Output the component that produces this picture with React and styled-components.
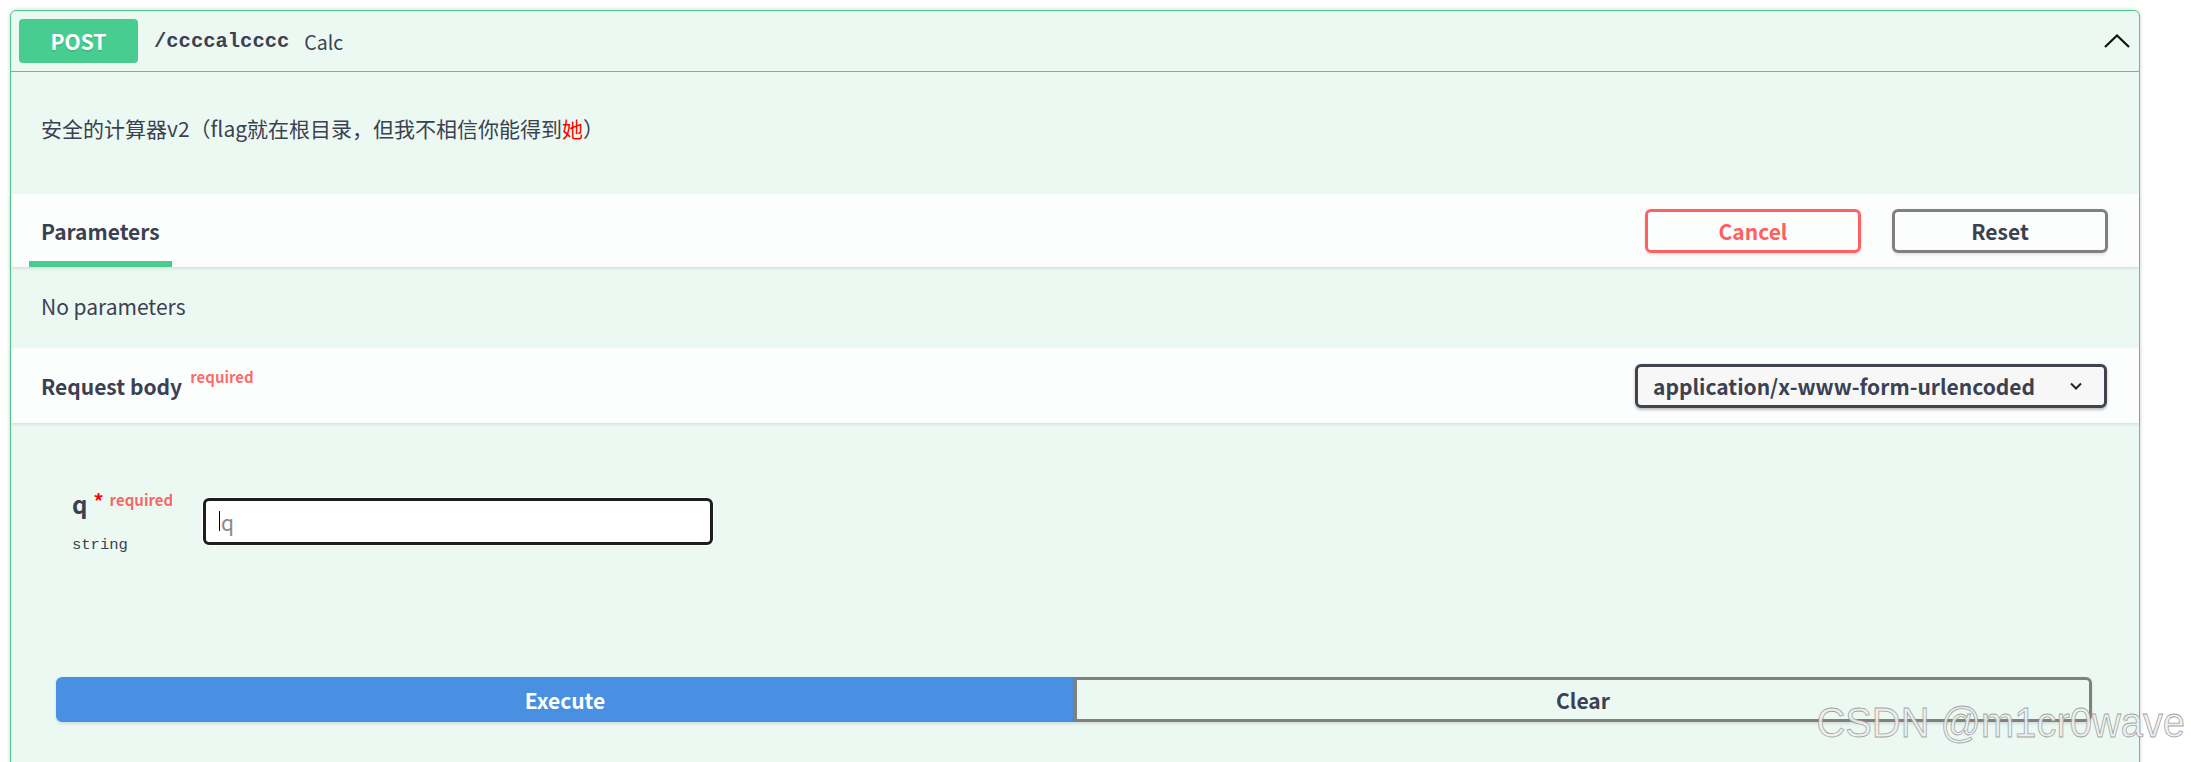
import React from 'react';
import styled, { createGlobalStyle } from 'styled-components';

const GlobalStyle = createGlobalStyle`
  html, body { margin: 0; padding: 0; background: #fff; overflow: hidden; }
  body { font-family: "Noto Sans CJK SC", "Noto Sans", sans-serif; color: #3b4151; }
  * { box-sizing: border-box; }
`;

const SANS = `"Noto Sans CJK SC", "Noto Sans", sans-serif`;
const MONO = `"Liberation Mono", "DejaVu Sans Mono", monospace`;

const Page = styled.div`
  position: relative;
  height: 762px;
  overflow: hidden;
  padding: 10px 51px 0 10px;
`;

const OpBlock = styled.section`
  border: 1px solid #49cc90;
  border-radius: 6px 6px 0 0;
  background: #ebf9f2;
  box-shadow: 0 0 4px rgba(0, 0, 0, 0.19);
`;

const Summary = styled.div`
  display: flex;
  align-items: center;
  padding: 8px 9px 8px 8px;
  border-bottom: 1px solid #49cc90;
`;

const Method = styled.span`
  display: flex;
  align-items: center;
  justify-content: center;
  width: 119px;
  height: 44px;
  border-radius: 4px;
  background: #49cc90;
  color: #fff;
  font-family: ${SANS};
  font-size: 21px;
  font-weight: 700;
  text-shadow: 0 1.5px 0 rgba(0, 0, 0, 0.1);
`;

const Path = styled.span`
  margin-left: 16px;
  padding-right: 15px;
  font-family: ${MONO};
  font-size: 20.5px;
  font-weight: 700;
  color: #3b4151;
`;

const SummaryDesc = styled.span`
  font-family: ${SANS};
  font-size: 19.5px;
  color: #3b4151;
`;

const Arrow = styled.svg`
  margin-left: auto;
  display: block;
`;

const Description = styled.div`
  padding: 41px 30px 51px;
  font-size: 21px;
  line-height: 30px;
  color: #3b4151;
`;

const Red = styled.span`
  color: #ff0000;
`;

const SectionHeader = styled.div`
  position: relative;
  z-index: 1;
  display: flex;
  align-items: center;
  height: ${(p) => p.$h}px;
  padding: ${(p) => p.$pad};
  background: rgba(255, 255, 255, 0.85);
  box-shadow: 0 1.5px 3px rgba(0, 0, 0, 0.1);
`;

const Tab = styled.h4`
  position: relative;
  display: flex;
  align-items: center;
  height: 100%;
  margin: 0;
  padding: 0 12px;
  font-size: 21px;
  font-weight: 700;
  color: #3b4151;
  &::after {
    content: "";
    position: absolute;
    left: 0;
    right: 0;
    bottom: 0;
    height: 6px;
    background: #49cc90;
  }
`;

const Title = styled.h4`
  margin: 0;
  font-size: 21px;
  font-weight: 700;
  color: #3b4151;
`;

const Sup = styled.sup`
  position: relative;
  top: -4px;
  margin-left: 8px;
  font-size: 15px;
  font-weight: 600;
  color: rgba(255, 0, 0, 0.6);
`;

const Actions = styled.div`
  display: flex;
  gap: 31px;
  margin-left: auto;
`;

const Button = styled.button`
  width: 216px;
  height: 44px;
  border: 3px solid ${(p) => (p.$danger ? '#ff6060' : '#808080')};
  border-radius: 6px;
  background: transparent;
  color: ${(p) => (p.$danger ? '#ff6060' : '#3b4151')};
  font-family: ${SANS};
  font-size: 21px;
  font-weight: 700;
  box-shadow: 0 1.5px 3px rgba(0, 0, 0, 0.1);
`;

const NoParams = styled.div`
  padding: 24px 30px 27px;
  font-size: 21px;
  line-height: 30px;
  color: #3b4151;
`;

const SelectBox = styled.div`
  display: flex;
  align-items: center;
  margin-left: auto;
  width: 472px;
  height: 44px;
  padding: 0 22px 0 15px;
  border: 3px solid #41444e;
  border-radius: 6px;
  background: #f7f7f7;
  box-shadow: 0 1.5px 3px rgba(0, 0, 0, 0.25);
  font-size: 21px;
  font-weight: 700;
  color: #3b4151;
  & svg { margin-left: auto; }
`;

const BodyContent = styled.div`
  padding: 67px 30px 0;
`;

const ParamRow = styled.div`
  display: flex;
  align-items: flex-start;
  padding-left: 31px;
`;

const NameCol = styled.div`
  width: 131px;
  flex: none;
`;

const ParamName = styled.div`
  font-size: 24px;
  line-height: 28px;
  font-weight: 700;
  color: #3b4151;
  white-space: nowrap;
`;

const Star = styled.span`
  margin-left: 6px;
  position: relative;
  top: -5px;
  font-size: 20px;
  color: red;
`;

const ReqTag = styled.span`
  position: relative;
  top: -8px;
  margin-left: 6px;
  font-size: 15px;
  font-weight: 600;
  color: rgba(255, 0, 0, 0.6);
`;

const ParamType = styled.div`
  margin-top: 13px;
  font-family: ${MONO};
  font-size: 15.5px;
  line-height: 20px;
  font-weight: 400;
  color: #3b4151;
`;

const InputCol = styled.div`
  position: relative;
  padding-top: 8px;
`;

const TextInput = styled.input`
  display: block;
  width: 510px;
  height: 47px;
  padding: 0 15px;
  border: 3px solid #1e1e1e;
  border-radius: 6px;
  background: #fff;
  box-shadow: 0 0 0 1px #fff;
  outline: none;
  font-family: ${SANS};
  font-size: 21px;
  color: #3b4151;
  &::placeholder { color: #8a8a8a; }
`;

const Caret = styled.span`
  position: absolute;
  left: 16px;
  top: 21px;
  width: 1px;
  height: 20px;
  background: #000;
`;

const BtnGroup = styled.div`
  display: flex;
  padding: 122px 47px 45px 45px;
`;

const WideButton = styled.button`
  flex: 1;
  height: 45px;
  border: 3px solid ${(p) => (p.$primary ? '#4990e2' : '#808080')};
  border-radius: ${(p) => (p.$primary ? '6px 0 0 6px' : '0 6px 6px 0')};
  background: ${(p) => (p.$primary ? '#4990e2' : 'transparent')};
  color: ${(p) => (p.$primary ? '#fff' : '#3b4151')};
  font-family: ${SANS};
  font-size: 21px;
  font-weight: 700;
  box-shadow: 0 1.5px 3px rgba(0, 0, 0, 0.1);
`;

const Watermark = styled.div`
  position: absolute;
  right: 6px;
  top: 702px;
  font-family: "Liberation Sans", Arial, sans-serif;
  font-size: 42px;
  line-height: 42px;
  color: rgba(238, 238, 238, 0.9);
  -webkit-text-stroke: 0.8px rgba(140, 140, 140, 0.8);
  transform: scaleX(0.95);
  transform-origin: right center;
  white-space: nowrap;
  pointer-events: none;
`;

export default function App() {
  return (
    <>
      <GlobalStyle />
      <Page>
        <OpBlock>
          <Summary>
            <Method>POST</Method>
            <Path>/ccccalcccc</Path>
            <SummaryDesc>Calc</SummaryDesc>
            <Arrow width="26" height="14" viewBox="0 0 26 14">
              <polyline points="1,13 13,1.5 25,13" fill="none" stroke="#111" strokeWidth="2.2" />
            </Arrow>
          </Summary>
          <Description>
            安全的计算器v2（flag就在根目录，但我不相信你能得到<Red>她</Red>）
          </Description>
          <SectionHeader $h={73} $pad="0 31px 0 18px">
            <Tab>Parameters</Tab>
            <Actions>
              <Button $danger>Cancel</Button>
              <Button>Reset</Button>
            </Actions>
          </SectionHeader>
          <NoParams>No parameters</NoParams>
          <SectionHeader $h={75} $pad="0 32px 0 30px">
            <Title>
              Request body<Sup>required</Sup>
            </Title>
            <SelectBox>
              <span>application/x-www-form-urlencoded</span>
              <svg width="12" height="8" viewBox="0 0 12 8">
                <polyline points="1,1.5 6,6.5 11,1.5" fill="none" stroke="#222" strokeWidth="2" />
              </svg>
            </SelectBox>
          </SectionHeader>
          <BodyContent>
            <ParamRow>
              <NameCol>
                <ParamName>
                  q<Star>*</Star>
                  <ReqTag>required</ReqTag>
                </ParamName>
                <ParamType>string</ParamType>
              </NameCol>
              <InputCol>
                <TextInput type="text" placeholder="q" />
                <Caret />
              </InputCol>
            </ParamRow>
          </BodyContent>
          <BtnGroup>
            <WideButton $primary>Execute</WideButton>
            <WideButton>Clear</WideButton>
          </BtnGroup>
        </OpBlock>
        <Watermark>CSDN @m1cr0wave</Watermark>
      </Page>
    </>
  );
}
